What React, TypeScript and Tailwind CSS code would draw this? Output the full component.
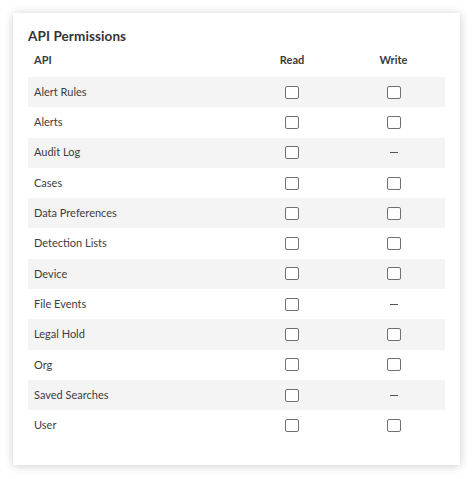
import React from "react";

type Perm = { name: string; write: boolean };

const perms: Perm[] = [
  { name: "Alert Rules", write: true },
  { name: "Alerts", write: true },
  { name: "Audit Log", write: false },
  { name: "Cases", write: true },
  { name: "Data Preferences", write: true },
  { name: "Detection Lists", write: true },
  { name: "Device", write: true },
  { name: "File Events", write: false },
  { name: "Legal Hold", write: true },
  { name: "Org", write: true },
  { name: "Saved Searches", write: false },
  { name: "User", write: true },
];

const Box = () => (
  <span className="block w-[14px] h-[13px] border-[1.5px] border-[#707070] rounded-[2px] bg-white" />
);

export default function App() {
  return (
    <div
      className="w-[474px] h-[479px] bg-white pt-[13px] pl-[13px]"
      style={{ fontFamily: "Lato, 'Open Sans', sans-serif" }}
    >
      <div className="w-[447px] h-[452px] bg-white shadow-[0_1px_9px_rgba(0,0,0,0.2)] pt-[15px] px-[15px] text-[#333]">
        <h2 className="text-[13.5px] font-bold leading-[16px] h-[16px] tracking-[0.1px]">API Permissions</h2>
        <div className="grid grid-cols-[1fr_100px_103px] h-[34px] items-center text-[11px] font-bold text-[#3a3a3a] mt-[-1px]">
          <span className="pl-[6px]">API</span>
          <span className="text-center">Read</span>
          <span className="text-center">Write</span>
        </div>
        <div>
          {perms.map((p, i) => (
            <div
              key={p.name}
              className={`grid grid-cols-[1fr_100px_103px] h-[30.3px] items-center text-[11px] text-[#3d3d3d] ${
                i % 2 === 0 ? "bg-[#f4f4f4]" : "bg-white"
              }`}
            >
              <span className="pl-[6px]">{p.name}</span>
              <span className="flex justify-center">
                <Box />
              </span>
              <span className="flex justify-center">
                {p.write ? <Box /> : <span className="block w-[8px] h-px bg-[#555]" />}
              </span>
            </div>
          ))}
        </div>
      </div>
    </div>
  );
}
